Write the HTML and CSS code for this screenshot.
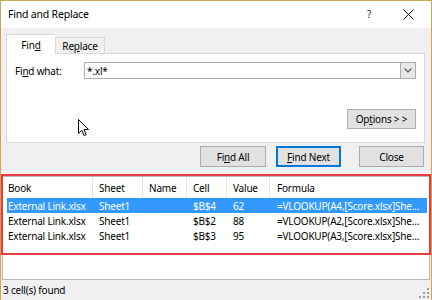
FILE: index.html
```html
<!DOCTYPE html>
<html>
<head>
<meta charset="utf-8">
<link rel="stylesheet" href="styles.css">
</head>
<body>
<div class="window">
  <div class="titlebar">
    <span class="title">Find and Replace</span>
    <span class="tb-help">?</span>
    <span class="tb-close"><svg width="11" height="11" viewBox="0 0 11 11"><path d="M0.5 0.5 L10.5 10.5 M10.5 0.5 L0.5 10.5" stroke="#111" stroke-width="1" fill="none"/></svg></span>
  </div>
  <div class="body">
    <div class="tabs">
      <div class="tab active">Fin<u>d</u></div>
      <div class="tab">Re<u>p</u>lace</div>
    </div>
    <div class="panel">
      <div class="find-row">
        <span class="label">Fi<u>n</u>d what:</span>
        <div class="combo">
          <span class="combo-text">*.xl*</span>
          <span class="combo-btn"><svg width="8" height="5" viewBox="0 0 8 5"><path d="M0.5 0.5 L4 4 L7.5 0.5" stroke="#555" stroke-width="1.1" fill="none"/></svg></span>
        </div>
      </div>
      <div class="options-row">
        <span class="btn options">Op<u>t</u>ions &gt; &gt;</span>
      </div>
    </div>
    <div class="actions">
      <span class="btn findall">Fi<u>n</u>d All</span>
      <span class="btn default findnext"><u>F</u>ind Next</span>
      <span class="btn close">Close</span>
    </div>
    <div class="results">
      <div class="grid header">
        <span class="c first">Book</span><span class="c">Sheet</span><span class="c">Name</span><span class="c">Cell</span><span class="c">Value</span><span class="c last">Formula</span>
      </div>
      <div class="grid row selected">
        <span class="c first">External Link.xlsx</span><span class="c">Sheet1</span><span class="c"></span><span class="c">$B$4</span><span class="c">62</span><span class="c last">=VLOOKUP(A4,[Score.xlsx]She...</span>
      </div>
      <div class="grid row">
        <span class="c first">External Link.xlsx</span><span class="c">Sheet1</span><span class="c"></span><span class="c">$B$2</span><span class="c">88</span><span class="c last">=VLOOKUP(A2,[Score.xlsx]She...</span>
      </div>
      <div class="grid row">
        <span class="c first">External Link.xlsx</span><span class="c">Sheet1</span><span class="c"></span><span class="c">$B$3</span><span class="c">95</span><span class="c last">=VLOOKUP(A3,[Score.xlsx]She...</span>
      </div>
    </div>
    <div class="status">
      <span class="status-text">3 cell(s) found</span>
      <svg class="grip" width="10" height="10" viewBox="0 0 10 10">
        <rect x="8" y="0" width="2" height="2" fill="#a0a0a0"/>
        <rect x="4" y="4" width="2" height="2" fill="#a0a0a0"/>
        <rect x="8" y="4" width="2" height="2" fill="#a0a0a0"/>
        <rect x="0" y="8" width="2" height="2" fill="#a0a0a0"/>
        <rect x="4" y="8" width="2" height="2" fill="#a0a0a0"/>
        <rect x="8" y="8" width="2" height="2" fill="#a0a0a0"/>
      </svg>
    </div>
  </div>
  <div class="highlight"></div>
  <svg class="cursor" width="12" height="18" viewBox="0 0 12 18"><path d="M0.5 0.5 L0.5 14.5 L3.8 11.3 L6 16.5 L8.2 15.6 L6 10.5 L10.5 10.5 Z" fill="#fff" stroke="#000" stroke-width="1" stroke-linejoin="miter"/></svg>
</div>
</body>
</html>
```

FILE: styles.css
```css
* { box-sizing: border-box; }
html, body {
  margin: 0;
  padding: 0;
  width: 432px;
  height: 300px;
  overflow: hidden;
  background: #f0f0f0;
}
body {
  font-family: "Noto Sans", "Open Sans", sans-serif;
  font-size: 10px;
  letter-spacing: -0.2px;
  color: #000;
}
u { text-decoration: underline; text-underline-offset: 1px; }

.window {
  position: relative;
  width: 432px;
  height: 300px;
  border: 1px solid #c9a74e;
  border-bottom: none;
  background: #f0f0f0;
  display: flex;
  flex-direction: column;
}

.titlebar {
  height: 27px;
  flex: none;
  background: #fff;
  display: flex;
  align-items: center;
  padding-left: 7px;
}
.title { font-size: 10.5px; flex: 1; padding-bottom: 1px; }
.tb-help { width: 10px; margin-right: 26px; font-size: 10px; color: #222; padding-bottom: 2px; }
.tb-close { width: 11px; height: 11px; margin-right: 17px; display: flex; }

.body {
  flex: 1;
  display: flex;
  flex-direction: column;
}

.tabs {
  display: flex;
  align-items: flex-end;
  height: 25px;
  padding-left: 5px;
}
.tab {
  height: 16px;
  width: 50px;
  border: 1px solid #d9d9d9;
  border-bottom: none;
  background: #f0f0f0;
  display: flex;
  align-items: center;
  justify-content: center;
  padding-top: 1px;
}
.tab.active {
  width: 49px;
  height: 20px;
  background: #fff;
  border-right: none;
  margin-bottom: -1px;
  position: relative;
  z-index: 1;
  padding-top: 0;
}

.panel {
  margin-left: 5px;
  width: 419px;
  height: 90px;
  background: #fff;
  border: 1px solid #d9d9d9;
  padding: 8px 8px 0 8px;
  display: flex;
  flex-direction: column;
}
.find-row {
  display: flex;
  align-items: center;
  height: 17px;
}
.label { width: 69px; }
.combo {
  width: 332px;
  height: 17px;
  border: 1px solid #adadad;
  display: flex;
  align-items: center;
  background: #fff;
}
.combo-text { flex: 1; padding-left: 2px; }
.combo-btn {
  width: 16px;
  height: 17px;
  margin: -1px -1px -1px 0;
  border: 1px solid #adadad;
  background: #e6e6e6;
  display: flex;
  align-items: center;
  justify-content: center;
}
.options-row {
  display: flex;
  justify-content: flex-end;
  margin-top: 30px;
  padding-right: 0;
}

.btn {
  display: flex;
  align-items: center;
  justify-content: center;
  background: #e1e1e1;
  border: 1px solid #adadad;
  height: 21px;
  width: 65px;
}
.btn.options { width: 69px; height: 20px; }
.btn.default { border: 2px solid #0078d7; }

.actions {
  display: flex;
  justify-content: flex-end;
  margin-top: 3px;
  padding-right: 7px;
  gap: 10px;
}
.findall { width: 66px; }
.btn.close { margin-left: 8px; }

.results {
  margin: 9px 1px 0 1px;
  height: 104px;
  background: #fff;
  border: 1px solid #b9b9b9;
  padding: 0 2px 0 4px;
}
.grid {
  display: grid;
  grid-template-columns: 86px 50px 44px 40px 43px 1fr;
  align-items: center;
}
.header { height: 21px; }
.header .c {
  height: 21px;
  display: flex;
  align-items: center;
  border-right: 1px solid #e5e5e5;
}
.header .c.last { border-right: none; }
.row { height: 15px; }
.c {
  padding-left: 6px;
  white-space: nowrap;
  overflow: hidden;
}
.c.first { padding-left: 1px; }
.c.last { padding-left: 7px; }
.row.selected {
  background: #3399ff;
  color: #fff;
}

.status {
  flex: 1;
  display: flex;
  align-items: center;
  justify-content: space-between;
  padding-left: 2px;
  position: relative;
}
.status-text { padding-bottom: 1px; }
.grip { align-self: flex-end; margin-bottom: 2px; margin-right: 2px; }

.highlight {
  position: absolute;
  left: 0;
  top: 173px;
  width: 430px;
  height: 81px;
  border: 2px solid #ea3943;
  pointer-events: none;
}
.cursor {
  position: absolute;
  left: 77px;
  top: 118px;
}
```
